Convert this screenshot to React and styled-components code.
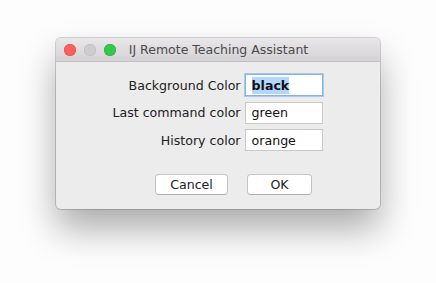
import React from 'react';
import styled, { createGlobalStyle } from 'styled-components';

const GlobalStyle = createGlobalStyle`
  html, body {
    margin: 0;
    padding: 0;
    background: #fdfdfd;
  }
  body {
    font-family: "DejaVu Sans", "Liberation Sans", sans-serif;
    -webkit-font-smoothing: antialiased;
  }
`;

const Page = styled.div`
  width: 436px;
  height: 283px;
  padding-top: 38px;
  box-sizing: border-box;
  display: flex;
  justify-content: center;
  align-items: flex-start;
`;

const Window = styled.div`
  width: 324px;
  height: 171px;
  border-radius: 5px;
  background: #ececec;
  box-shadow: 0 0 0 1px rgba(0, 0, 0, 0.16), 0 20px 36px rgba(0, 0, 0, 0.32);
  overflow: hidden;
  display: flex;
  flex-direction: column;
`;

const TitleBar = styled.div`
  height: 23px;
  display: flex;
  align-items: center;
  padding-left: 8px;
  background: linear-gradient(#e9e7e9, #d4d2d4);
  border-bottom: 1px solid #c2c0c2;
  position: relative;
`;

const Light = styled.span`
  width: 12px;
  height: 12px;
  border-radius: 50%;
  background: ${p => p.$color};
  box-shadow: inset 0 0 0 0.5px ${p => p.$edge};
  margin-right: 8px;
`;

const Title = styled.div`
  position: absolute;
  left: 0;
  right: 0;
  text-align: center;
  padding-left: 1px;
  font-size: 12.5px;
  color: #4a4a4a;
  pointer-events: none;
`;

const Body = styled.div`
  flex: 1;
  padding-top: 12px;
  display: flex;
  flex-direction: column;
  align-items: center;
`;

const Form = styled.div`
  display: grid;
  grid-template-columns: auto 78px;
  column-gap: 4px;
  row-gap: 5.5px;
  align-items: center;
  padding-right: 1px;
`;

const Label = styled.label`
  text-align: right;
  font-size: 12.6px;
  color: #222;
`;

const Field = styled.div`
  height: 22px;
  box-sizing: border-box;
  background: #fff;
  border: 1px solid ${p => (p.$focused ? '#86b2e6' : '#c9c9c9')};
  box-shadow: ${p => (p.$focused ? '0 0 0 1px #a9c9f0' : 'none')};
  display: flex;
  align-items: center;
  padding-left: 6px;
  font-size: 12.6px;
  color: #111;
`;

const Selected = styled.span`
  background: #b3d7ff;
  font-weight: bold;
  padding: 1px 0;
`;

const Buttons = styled.div`
  display: flex;
  gap: 19px;
  margin-top: 23px;
  padding-left: 31px;
`;

const Button = styled.button`
  width: ${p => p.$width}px;
  height: 21px;
  border: 1px solid #c4c4c4;
  border-bottom-color: #b0b0b0;
  border-radius: 4px;
  background: #fff;
  font-family: inherit;
  font-size: 12.6px;
  color: #222;
  padding: 0;
`;

const rows = [
  { label: 'Background Color', value: 'black', focused: true },
  { label: 'Last command color', value: 'green' },
  { label: 'History color', value: 'orange' },
];

const App = () => (
  <>
    <GlobalStyle />
    <Page>
      <Window>
        <TitleBar>
          <Light $color="#fc605c" $edge="#de4a46" />
          <Light $color="#cdcdcd" $edge="#b8b8b8" />
          <Light $color="#34c84a" $edge="#28a83c" />
          <Title>IJ Remote Teaching Assistant</Title>
        </TitleBar>
        <Body>
          <Form>
            {rows.map(r => (
              <React.Fragment key={r.label}>
                <Label>{r.label}</Label>
                <Field $focused={r.focused}>
                  {r.focused ? <Selected>{r.value}</Selected> : r.value}
                </Field>
              </React.Fragment>
            ))}
          </Form>
          <Buttons>
            <Button $width={73}>Cancel</Button>
            <Button $width={65}>OK</Button>
          </Buttons>
        </Body>
      </Window>
    </Page>
  </>
);

export default App;
